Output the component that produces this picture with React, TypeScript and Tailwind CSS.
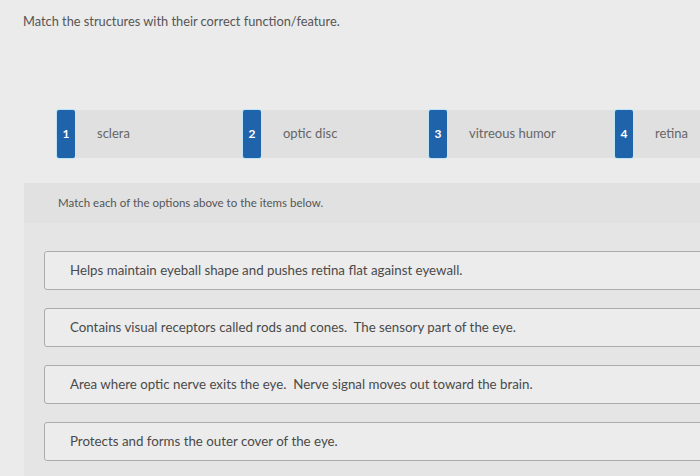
import React from "react";

const options = [
  { n: "1", label: "sclera" },
  { n: "2", label: "optic disc" },
  { n: "3", label: "vitreous humor" },
  { n: "4", label: "retina" },
];

const items = [
  "Helps maintain eyeball shape and pushes retina flat against eyewall.",
  "Contains visual receptors called rods and cones.  The sensory part of the eye.",
  "Area where optic nerve exits the eye.  Nerve signal moves out toward the brain.",
  "Protects and forms the outer cover of the eye.",
];

export default function App() {
  return (
    <div
      className="w-[700px] h-[476px] overflow-hidden bg-[#ebebeb] flex flex-col"
      style={{ fontFamily: "Lato, 'Open Sans', sans-serif" }}
    >
      <div className="pt-[13px] pl-[23px] text-[12.8px] leading-[16px] text-[#555]">
        Match the structures with their correct function/feature.
      </div>
      <div className="mt-[81px] flex pl-[57px] h-[48px]">
        {options.map((o, i) => (
          <div key={o.n} className={`flex h-full ${i === 3 ? "flex-1" : "w-[186px]"}`}>
            <div className="w-[18px] h-full bg-[#1f63aa] rounded-[2px] shadow-[0_0_0_1px_#bfe4f5] flex items-center justify-center text-white text-[12px] font-bold">
              {o.n}
            </div>
            <div className="flex-1 h-full bg-[#e0e0e0] pl-[22px] flex items-center text-[13px] text-[#666]">
              {o.label}
            </div>
          </div>
        ))}
      </div>
      <div className="mt-[25px] ml-[24px] flex-1 bg-[#e5e5e5] flex flex-col">
        <div className="h-[40px] bg-[#e1e1e1] pl-[34px] flex items-center text-[11.5px] text-[#555]">
          Match each of the options above to the items below.
        </div>
        <div className="mt-[28px] ml-[20px] mr-[-10px] flex flex-col gap-[18px]">
          {items.map((t) => (
            <div
              key={t}
              className="h-[39px] border border-[#a9adb0] rounded-[3px] bg-[#ececec] pl-[25px] flex items-center text-[13.3px] text-[#4a4a4a] whitespace-pre"
            >
              {t}
            </div>
          ))}
        </div>
      </div>
    </div>
  );
}
